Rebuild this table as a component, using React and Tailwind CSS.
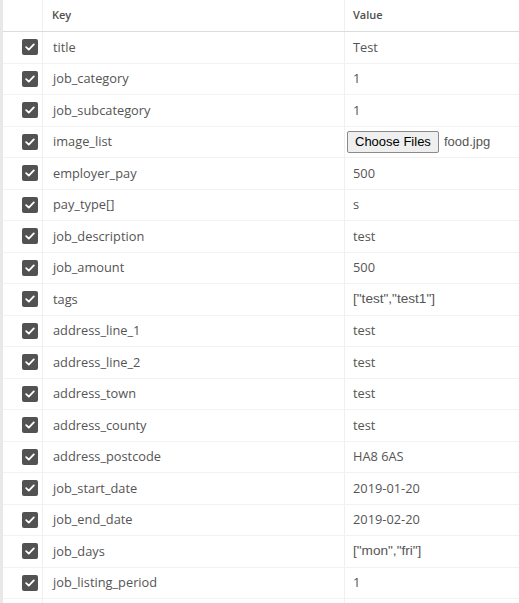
import React from "react";

const rows = [
  ["title", "Test"],
  ["job_category", "1"],
  ["job_subcategory", "1"],
  ["image_list", null],
  ["employer_pay", "500"],
  ["pay_type[]", "s"],
  ["job_description", "test"],
  ["job_amount", "500"],
  ["tags", '["test","test1"]', true],
  ["address_line_1", "test"],
  ["address_line_2", "test"],
  ["address_town", "test"],
  ["address_county", "test"],
  ["address_postcode", "HA8 6AS"],
  ["job_start_date", "2019-01-20"],
  ["job_end_date", "2019-02-20"],
  ["job_days", '["mon","fri"]', true],
  ["job_listing_period", "1"],
  ["", ""],
];

function Check() {
  return (
    <div className="w-4 h-4 rounded-[2px] bg-[#525252] flex items-center justify-center">
      <svg width="10" height="8" viewBox="0 0 10 8" fill="none">
        <path d="M1.2 4.2 L3.8 6.6 L8.8 1.4" stroke="white" strokeWidth="1.8" strokeLinecap="round" strokeLinejoin="round" />
      </svg>
    </div>
  );
}

export default function App() {
  return (
    <div className="w-[519px] h-[603px] overflow-hidden bg-white flex font-['Open_Sans',sans-serif] text-[12.8px] text-[#555555]">
      <div className="w-[3px] bg-[#e8e8e8] shrink-0" />
      <div className="flex-1 flex flex-col">
        <div className="flex h-[32px] border-b border-[#dcdcdc] shrink-0">
          <div className="w-[40px] border-r border-[#f0f0f0]" />
          <div className="w-[302px] border-r border-[#f0f0f0] pl-[9px] flex items-center text-[11px] font-semibold text-[#505050]">Key</div>
          <div className="flex-1 pl-[8px] flex items-center text-[11px] font-semibold text-[#505050]">Value</div>
        </div>
        {rows.map(([k, v, arial], i) => (
          <div key={i} className="flex h-[31.5px] border-b border-[#f2f2f2] shrink-0">
            <div className="w-[40px] border-r border-[#f0f0f0] flex items-center justify-end pr-[4px]">
              {k && <Check />}
            </div>
            <div className="w-[302px] border-r border-[#f0f0f0] pl-[10px] flex items-center">{k}</div>
            <div className="flex-1 pl-[8px] flex items-center">
              {v === null ? (
                <div className="flex items-center font-['Liberation_Sans',sans-serif] text-[13px] -ml-[6px]">
                  <div className="h-[22px] px-[7px] flex items-center border border-[#8a8a8a] rounded-[2px] bg-[#efefef] text-black">Choose Files</div>
                  <span className="ml-[5px] text-[#555555]">food.jpg</span>
                </div>
              ) : arial ? (
                <span className="font-['Liberation_Sans',sans-serif] text-[13.6px]">{v}</span>
              ) : (
                v
              )}
            </div>
          </div>
        ))}
      </div>
    </div>
  );
}
